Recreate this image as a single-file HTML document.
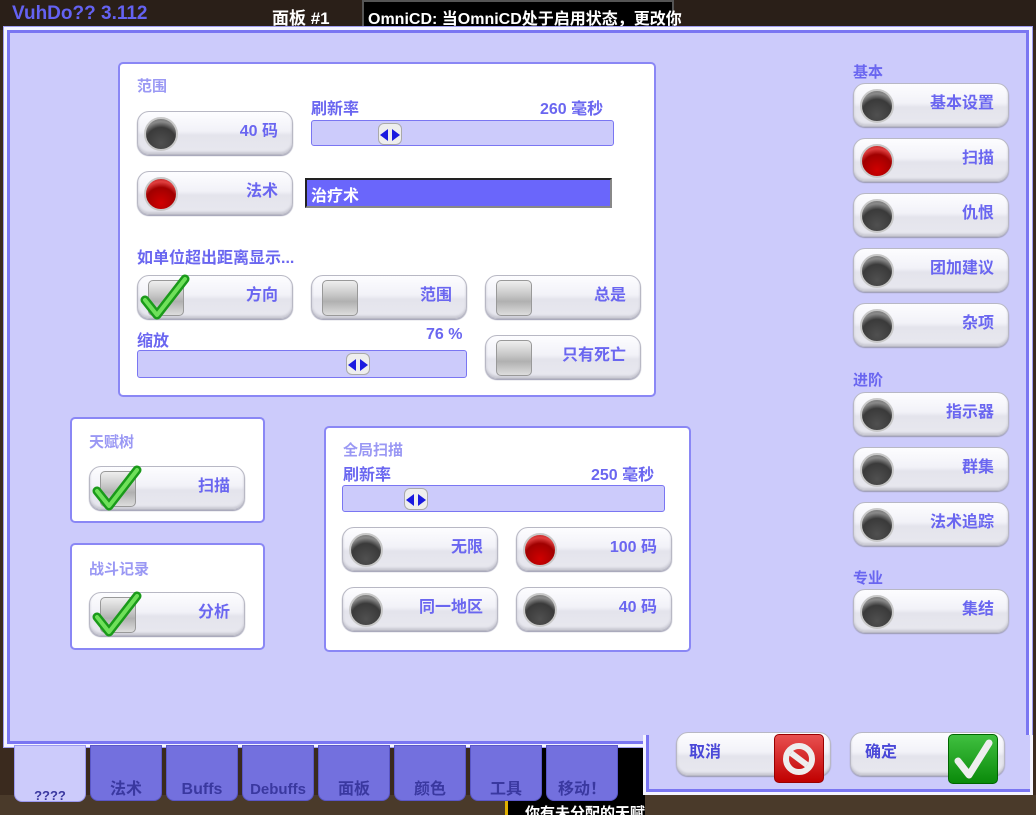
<!DOCTYPE html>
<html><head><meta charset="utf-8"><style>
*{margin:0;padding:0;box-sizing:border-box}
html,body{width:1036px;height:815px;overflow:hidden}
body{position:relative;background:#3a2a1e;font-family:"Liberation Sans","Noto Sans CJK SC",sans-serif;font-weight:bold}
.a{position:absolute}
.main{left:4px;top:27px;width:1028px;height:720px;background:#cccbfb;border:3px solid #f4f4ff;box-shadow:inset 0 0 0 3px #7a76f2, 0 0 0 1px #9e9cf0}
.box{position:absolute;background:#fff;border:2px solid #8a87f5;border-radius:5px}
.t{position:absolute;color:#6a66f0;font-size:16px;white-space:nowrap}
.lt{color:#9a98f4}
.btn{position:absolute;width:156px;height:44px;border-radius:12px;background:linear-gradient(#fdfdff 0%,#f2f2f8 45%,#e4e4ec 55%,#e8e8ef 100%);border:1px solid #b8b8c4;box-shadow:inset 0 -2px 2px #c8c8d2, 0 1px 1px #9a9ab0}
.btn span{position:absolute;right:14px;top:5px;color:#6a66f0;font-size:16px}
.r{position:absolute;left:6px;top:5px;width:34px;height:34px;border-radius:50%;border:2px solid #c8c8c8;background:radial-gradient(circle at 50% 80%,#505050,#3a3a3a 55%,#8a8a8a 75%,#6c6c6c)}
.red{background:radial-gradient(circle at 50% 80%,#d00000,#a00000 55%,#e04040 75%,#b01010)}
.c{position:absolute;left:10px;top:4px;width:36px;height:36px;border-radius:5px;border:1px solid #999;background:linear-gradient(#eee,#c8c8c8 40%,#b0b0b0 60%,#ddd)}
.k{position:absolute;left:0px;top:-4px}
.sl{position:absolute;background:#cccbfb;border:1px solid #7a76f2;border-radius:3px}
.h{position:absolute;top:2px;width:24px;height:22px;border-radius:6px;background:#eee;border:1px solid #aaa}
.h:before{content:"";position:absolute;left:1px;top:5px;border:6px solid transparent;border-right:8px solid #1a1ae0;border-left:0}
.h:after{content:"";position:absolute;right:1px;top:5px;border:6px solid transparent;border-left:8px solid #1a1ae0;border-right:0}
.tab{position:absolute;top:745px;width:72px;height:56px;background:#7370de;border-radius:0 0 8px 8px;border:1px solid #5a57c8;color:#3a38a0;font-size:16px;line-height:20px;text-align:center;padding-top:34px;overflow:hidden}
</style></head><body>
<div class="a" style="left:0;top:0;width:1036px;height:30px;background:#2a1f18"></div>
<div class="t" style="left:12px;top:3px;font-size:19px;color:#6462f2">VuhDo?? 3.112</div>
<div class="t" style="left:272px;top:4px;font-size:17px;color:#fff">面板 #1</div>
<div class="a" style="left:362px;top:0;width:312px;height:30px;background:#000;border:2px solid #555"></div>
<div class="t" style="left:368px;top:5px;font-size:16px;color:#fff">OmniCD: 当OmniCD处于启用状态，更改你</div>
<div class="a" style="left:0;top:795px;width:1036px;height:20px;background:#4a3a2a"></div>
<div class="a" style="left:505px;top:745px;width:140px;height:70px;background:#000;border-left:3px solid #e0b000"></div>
<div class="t" style="left:525px;top:802px;color:#fff;font-size:15px">你有未分配的天赋</div>

<div class="a main"></div>
<div class="a" style="left:643px;top:735px;width:390px;height:60px;background:#cccbfb;border:3px solid #f4f4ff;border-top:0;box-shadow:inset 3px -3px 0 #7a76f2"></div>

<div class="tab" style="left:14px;background:#cccbfb;color:#3a38a0;border-color:#9a98f0;height:57px;font-size:13px;padding-top:40px">????</div>
<div class="tab" style="left:90px">法术</div>
<div class="tab" style="left:166px">Buffs</div>
<div class="tab" style="left:242px;font-size:15px">Debuffs</div>
<div class="tab" style="left:318px">面板</div>
<div class="tab" style="left:394px">颜色</div>
<div class="tab" style="left:470px">工具</div>
<div class="tab" style="left:546px">移动！</div>

<div class="box" style="left:118px;top:62px;width:538px;height:335px"></div>
<div class="t lt" style="left:137px;top:75px;font-size:15px">范围</div>
<div class="btn" style="left:137px;top:111px"><div class="r"></div><span>40 码</span></div>
<div class="btn" style="left:137px;top:171px"><div class="r red"></div><span>法术</span></div>
<div class="t" style="left:311px;top:95px">刷新率</div>
<div class="t" style="left:540px;top:95px">260 毫秒</div>
<div class="sl" style="left:311px;top:120px;width:303px;height:26px"><div class="h" style="left:66px"></div></div>
<div class="a" style="left:305px;top:178px;width:307px;height:30px;background:#6a66fb;border:2px solid #222;border-right-color:#888;border-bottom-color:#888"></div>
<div class="t" style="left:311px;top:182px;color:#fff">治疗术</div>
<div class="t" style="left:137px;top:244px">如单位超出距离显示...</div>
<div class="btn" style="left:137px;top:275px"><div class="c"></div><svg class="k" width="52" height="50" viewBox="0 0 52 50"><path d="M7 28 L19 43 L47 7" fill="none" stroke="#1a9a1a" stroke-width="9" stroke-linecap="round" stroke-linejoin="round"/><path d="M7 28 L19 43 L47 7" fill="none" stroke="#6fe05a" stroke-width="4" stroke-linecap="round" stroke-linejoin="round"/></svg><span>方向</span></div>
<div class="btn" style="left:311px;top:275px"><div class="c"></div><span>范围</span></div>
<div class="btn" style="left:485px;top:275px"><div class="c"></div><span>总是</span></div>
<div class="t" style="left:137px;top:327px">缩放</div>
<div class="t" style="left:426px;top:326px">76 %</div>
<div class="sl" style="left:137px;top:350px;width:330px;height:28px"><div class="h" style="left:208px"></div></div>
<div class="btn" style="left:485px;top:335px"><div class="c"></div><span>只有死亡</span></div>

<div class="box" style="left:70px;top:417px;width:195px;height:106px"></div>
<div class="t lt" style="left:89px;top:431px;font-size:15px">天赋树</div>
<div class="btn" style="left:89px;top:466px"><div class="c"></div><svg class="k" width="52" height="50" viewBox="0 0 52 50"><path d="M7 28 L19 43 L47 7" fill="none" stroke="#1a9a1a" stroke-width="9" stroke-linecap="round" stroke-linejoin="round"/><path d="M7 28 L19 43 L47 7" fill="none" stroke="#6fe05a" stroke-width="4" stroke-linecap="round" stroke-linejoin="round"/></svg><span>扫描</span></div>
<div class="box" style="left:70px;top:543px;width:195px;height:107px"></div>
<div class="t lt" style="left:89px;top:558px;font-size:15px">战斗记录</div>
<div class="btn" style="left:89px;top:592px"><div class="c"></div><svg class="k" width="52" height="50" viewBox="0 0 52 50"><path d="M7 28 L19 43 L47 7" fill="none" stroke="#1a9a1a" stroke-width="9" stroke-linecap="round" stroke-linejoin="round"/><path d="M7 28 L19 43 L47 7" fill="none" stroke="#6fe05a" stroke-width="4" stroke-linecap="round" stroke-linejoin="round"/></svg><span>分析</span></div>

<div class="box" style="left:324px;top:426px;width:367px;height:226px"></div>
<div class="t lt" style="left:343px;top:439px;font-size:15px">全局扫描</div>
<div class="t" style="left:343px;top:461px">刷新率</div>
<div class="t" style="left:591px;top:461px">250 毫秒</div>
<div class="sl" style="left:342px;top:485px;width:323px;height:27px"><div class="h" style="left:61px"></div></div>
<div class="btn" style="left:342px;top:527px"><div class="r"></div><span>无限</span></div>
<div class="btn" style="left:516px;top:527px"><div class="r red"></div><span>100 码</span></div>
<div class="btn" style="left:342px;top:587px"><div class="r"></div><span>同一地区</span></div>
<div class="btn" style="left:516px;top:587px"><div class="r"></div><span>40 码</span></div>

<div class="t" style="left:853px;top:61px;font-size:15px">基本</div>
<div class="btn" style="left:853px;top:83px"><div class="r"></div><span>基本设置</span></div>
<div class="btn" style="left:853px;top:138px"><div class="r red"></div><span>扫描</span></div>
<div class="btn" style="left:853px;top:193px"><div class="r"></div><span>仇恨</span></div>
<div class="btn" style="left:853px;top:248px"><div class="r"></div><span>团加建议</span></div>
<div class="btn" style="left:853px;top:303px"><div class="r"></div><span>杂项</span></div>
<div class="t" style="left:853px;top:369px;font-size:15px">进阶</div>
<div class="btn" style="left:853px;top:392px"><div class="r"></div><span>指示器</span></div>
<div class="btn" style="left:853px;top:447px"><div class="r"></div><span>群集</span></div>
<div class="btn" style="left:853px;top:502px"><div class="r"></div><span>法术追踪</span></div>
<div class="t" style="left:853px;top:567px;font-size:15px">专业</div>
<div class="btn" style="left:853px;top:589px"><div class="r"></div><span>集结</span></div>

<div class="btn" style="left:676px;top:732px;width:155px;height:44px"><span style="left:12px;right:auto;top:5px;color:#4a48d8">取消</span></div>
<div class="a" style="left:774px;top:734px;width:50px;height:49px;border-radius:5px;background:linear-gradient(#e85050,#c00000);border:1px solid #900"><svg width="48" height="47" viewBox="0 0 48 47"><circle cx="24" cy="24" r="13" fill="none" stroke="#eee" stroke-width="6"/><path d="M16 18 L32 30" stroke="#eee" stroke-width="6"/></svg></div>
<div class="btn" style="left:850px;top:732px;width:155px;height:44px"><span style="left:14px;right:auto;top:5px;color:#4a48d8">确定</span></div>
<div class="a" style="left:948px;top:734px;width:50px;height:50px;border-radius:5px;background:linear-gradient(#40c040,#0a8a0a);border:1px solid #060"><svg width="48" height="48" viewBox="0 0 48 48"><path d="M9 26 L20 40 L40 8" fill="none" stroke="#eee" stroke-width="7" stroke-linecap="round" stroke-linejoin="round"/></svg></div>
</body></html>
